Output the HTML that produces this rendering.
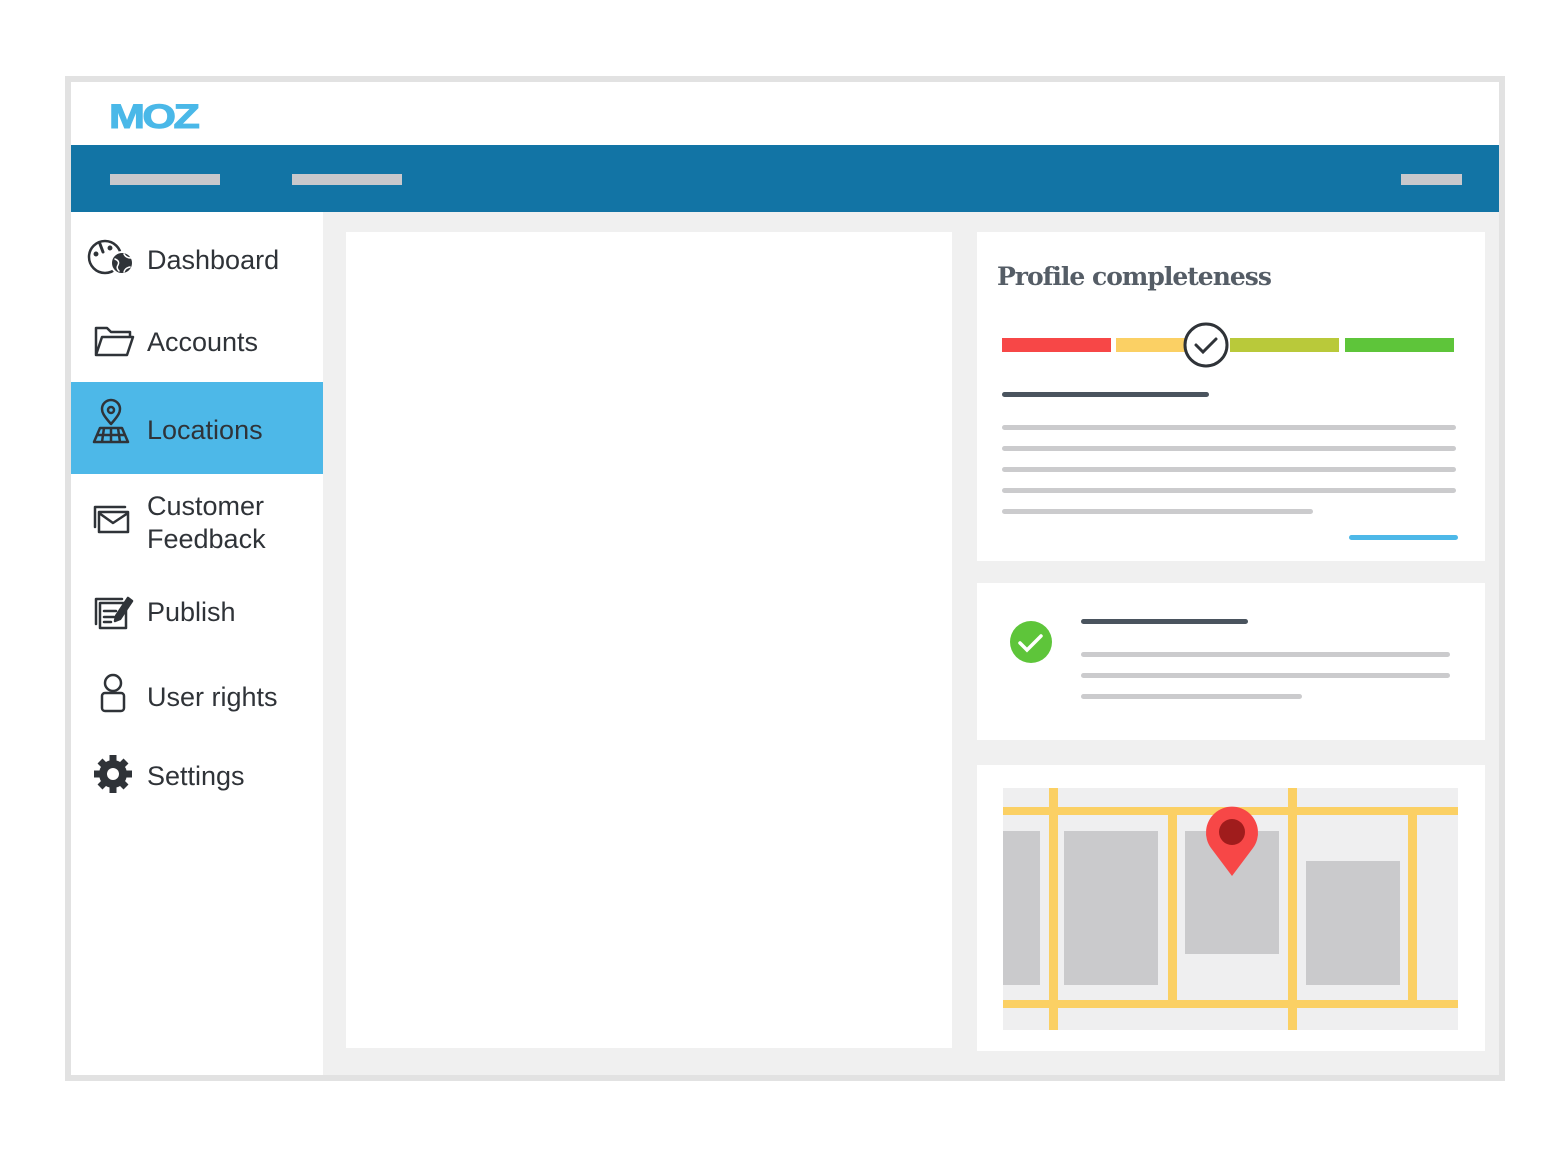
<!DOCTYPE html>
<html><head><meta charset="utf-8"><style>
*{margin:0;padding:0;box-sizing:border-box}
body{width:1568px;height:1165px;background:#fff;position:relative;overflow:hidden;font-family:"Liberation Sans",sans-serif}
.a{position:absolute}
.nav{position:absolute;left:147px;font-size:27px;color:#2f3338;line-height:33px}
.ln{position:absolute;height:5px;border-radius:3px;background:#cbcbcd}
</style></head><body>
<div class="a" style="left:65px;top:76px;width:1440px;height:1005px;background:#e2e2e2"></div>
<div class="a" style="left:71px;top:82px;width:1428px;height:993px;background:#fff"></div>
<div class="a" style="left:109px;top:98px;font-size:34px;line-height:38px;font-weight:bold;color:#4ab8e8;letter-spacing:-2px;transform:scaleX(1.27);transform-origin:left;-webkit-text-stroke:1px #4ab8e8">MOZ</div>
<div class="a" style="left:71px;top:145px;width:1428px;height:67px;background:#1274a5"></div>
<div class="a" style="left:110px;top:174px;width:110px;height:11px;background:#c8c8cc"></div>
<div class="a" style="left:292px;top:174px;width:110px;height:11px;background:#c8c8cc"></div>
<div class="a" style="left:1401px;top:174px;width:61px;height:11px;background:#c8c8cc"></div>
<div class="a" style="left:323px;top:212px;width:1176px;height:863px;background:#f0f0f0"></div>
<div class="a" style="left:346px;top:232px;width:606px;height:816px;background:#fff"></div>
<div class="a" style="left:977px;top:232px;width:508px;height:329px;background:#fff"></div>
<div class="a" style="left:977px;top:583px;width:508px;height:157px;background:#fff"></div>
<div class="a" style="left:977px;top:765px;width:508px;height:286px;background:#fff"></div>
<div class="a" style="left:71px;top:382px;width:252px;height:92px;background:#4db8e8"></div>

<div class="nav" style="top:244px">Dashboard</div>
<div class="nav" style="top:326px">Accounts</div>
<div class="nav" style="top:414px">Locations</div>
<div class="nav" style="top:490px">Customer<br>Feedback</div>
<div class="nav" style="top:596px">Publish</div>
<div class="nav" style="top:681px">User rights</div>
<div class="nav" style="top:760px">Settings</div>

<svg class="a" style="left:0;top:0" width="1568" height="1165" fill="none" stroke="#2f3338" stroke-width="2.5" stroke-linecap="round" stroke-linejoin="round">
<!-- dashboard -->
<circle cx="105" cy="257" r="16"/>
<path d="M103 252 L100 244" stroke-width="3"/>
<circle cx="96" cy="254" r="1.2" fill="#2f3338"/><circle cx="110" cy="248" r="1.2" fill="#2f3338"/>
<circle cx="122" cy="263" r="11" fill="#2f3338" stroke="#fff" stroke-width="2"/>
<path d="M115 259 q5 2 3 6 q-2 3 1 6 M124 254 q2 4 7 4 M124 272 q1-4 6-5" stroke="#fff" stroke-width="1.5"/>
<!-- accounts -->
<path d="M96 355 V328 h11 l4 4 h19 v5 M96 355 l6-18 h31 l-6 18 z"/>
<!-- locations -->
<path d="M111 424 c-8-9-9-12-9-15 a9 9 0 0 1 18 0 c0 3-1 6-9 15z"/>
<circle cx="111" cy="410" r="3"/>
<path d="M100 428 h22 l6 14 h-34 z M98 435 h26 M104 428 l-2 14 M111 428 v14 M118 428 l2 14"/>
<!-- feedback -->
<path d="M95 527 V507 h30 M99 532 V512 h29 v20 z M99 513 l14 10 l15-10"/>
<!-- publish -->
<path d="M96 624 V599 h26 M100 628 V603 h26 v25 z M104 611 h12 M104 617 h10 M104 622 h7"/>
<path d="M128 598 l4 3 l-12 18 l-5 2 l1-5 z" fill="#2f3338"/>
<!-- user -->
<circle cx="113" cy="683" r="8"/>
<rect x="102" y="693" width="22" height="18" rx="3"/>
<!-- settings -->
<circle cx="113" cy="774" r="14" fill="#2f3338" stroke="none"/>
<path d="M113 755 v38 M94 774 h38 M100 761 l26 26 M126 761 l-26 26" stroke-width="7" stroke-linecap="butt"/>
<circle cx="113" cy="774" r="6" fill="#fff" stroke="none"/>
</svg>

<div class="a" style="left:997px;top:262px;font-family:'DejaVu Serif','Liberation Serif',serif;font-weight:bold;font-size:25px;color:#555d66;letter-spacing:-1px">Profile completeness</div>
<div class="a" style="left:1002px;top:338px;width:109px;height:14px;background:#f74747"></div>
<div class="a" style="left:1116px;top:338px;width:80px;height:14px;background:#fbd064"></div>
<div class="a" style="left:1230px;top:338px;width:109px;height:14px;background:#b9c93a"></div>
<div class="a" style="left:1345px;top:338px;width:109px;height:14px;background:#5ec53a"></div>
<svg class="a" style="left:1182px;top:321px" width="48" height="48"><circle cx="24" cy="24" r="21" fill="#fff" stroke="#2f3338" stroke-width="3"/><path d="M14 24 l7 7 l13-13" fill="none" stroke="#2f3338" stroke-width="3" stroke-linecap="round"/></svg>
<div class="ln" style="left:1002px;top:392px;width:207px;height:5px;background:#4a545e"></div>
<div class="ln" style="left:1002px;top:425px;width:454px"></div>
<div class="ln" style="left:1002px;top:446px;width:454px"></div>
<div class="ln" style="left:1002px;top:467px;width:454px"></div>
<div class="ln" style="left:1002px;top:488px;width:454px"></div>
<div class="ln" style="left:1002px;top:509px;width:311px"></div>
<div class="ln" style="left:1349px;top:535px;width:109px;background:#4db8e8"></div>

<svg class="a" style="left:1009px;top:620px" width="44" height="44"><circle cx="22" cy="22" r="21" fill="#5ec53a"/><path d="M11 23 l7 7 l14-14" fill="none" stroke="#fff" stroke-width="3.5" stroke-linecap="round"/></svg>
<div class="ln" style="left:1081px;top:619px;width:167px;background:#4a545e"></div>
<div class="ln" style="left:1081px;top:652px;width:369px"></div>
<div class="ln" style="left:1081px;top:673px;width:369px"></div>
<div class="ln" style="left:1081px;top:694px;width:221px"></div>

<svg class="a" style="left:1003px;top:788px" width="455" height="242">
<rect width="455" height="242" fill="#efeff0"/>
<g fill="#cacacc">
<rect x="0" y="43" width="37" height="154"/>
<rect x="61" y="43" width="94" height="154"/>
<rect x="182" y="43" width="94" height="123"/>
<rect x="303" y="73" width="94" height="124"/>
</g>
<g fill="#fbd064">
<rect x="0" y="19" width="455" height="8"/>
<rect x="0" y="212" width="455" height="8"/>
<rect x="46" y="0" width="9" height="242"/>
<rect x="165" y="23" width="9" height="193"/>
<rect x="285" y="0" width="9" height="242"/>
<rect x="405" y="23" width="9" height="193"/>
</g>
<path d="M229 88 L208 60 A26 26 0 1 1 250 60 Z" fill="#f74747"/>
<circle cx="229" cy="44" r="13" fill="#a01c1c"/>
</svg>
</body></html>
